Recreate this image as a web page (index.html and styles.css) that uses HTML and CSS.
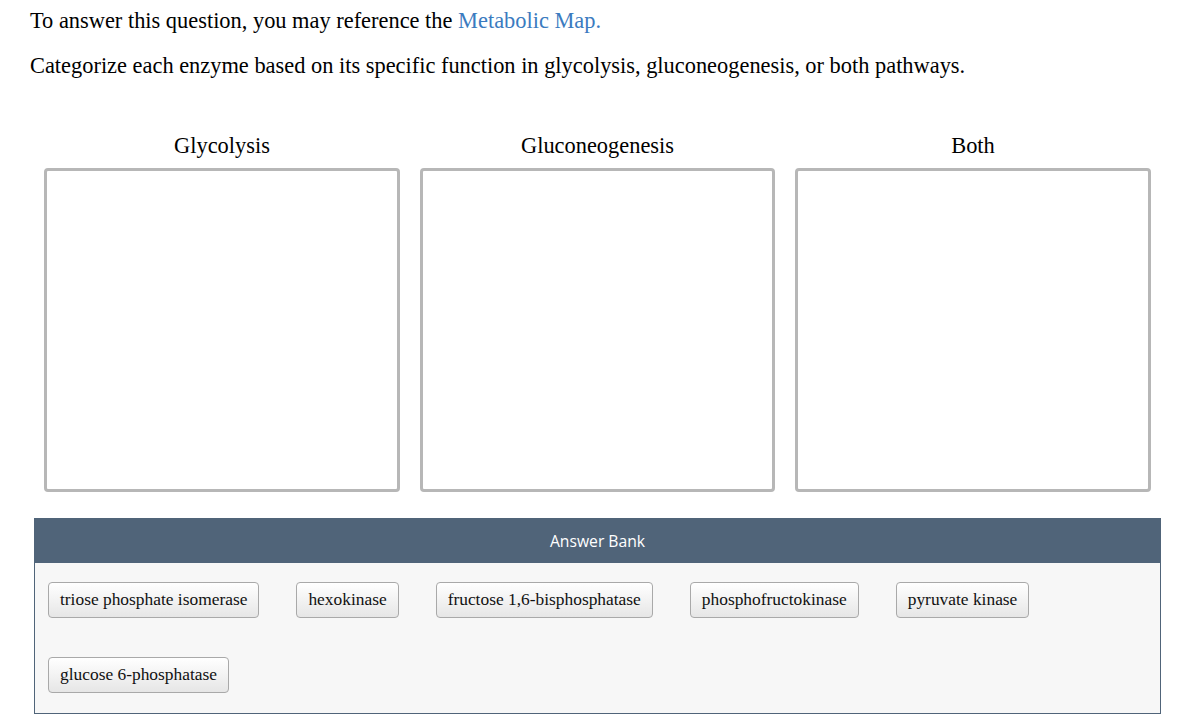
FILE: index.html
```html
<!DOCTYPE html>
<html>
<head>
<meta charset="utf-8">
<link rel="stylesheet" href="styles.css">
</head>
<body>
<div class="page">
  <p class="intro first">To answer this question, you may reference the <a class="link" href="#">Metabolic Map.</a></p>
  <p class="intro second">Categorize each enzyme based on its specific function in glycolysis, gluconeogenesis, or both pathways.</p>
  <div class="categories">
    <div class="category">
      <div class="cat-title">Glycolysis</div>
      <div class="dropbox"></div>
    </div>
    <div class="category">
      <div class="cat-title">Gluconeogenesis</div>
      <div class="dropbox"></div>
    </div>
    <div class="category">
      <div class="cat-title">Both</div>
      <div class="dropbox"></div>
    </div>
  </div>
  <div class="bank">
    <div class="bank-header">Answer Bank</div>
    <div class="bank-body">
      <div class="chip">triose phosphate isomerase</div>
      <div class="chip">hexokinase</div>
      <div class="chip">fructose 1,6-bisphosphatase</div>
      <div class="chip">phosphofructokinase</div>
      <div class="chip">pyruvate kinase</div>
      <div class="chip">glucose 6-phosphatase</div>
    </div>
  </div>
</div>
</body>
</html>
```
FILE: styles.css
```css
html, body {
  margin: 0;
  padding: 0;
  background: #ffffff;
}
body {
  font-family: "Liberation Serif", "Times New Roman", serif;
  color: #000;
}
.page {
  padding: 9px 0 0 30px;
  width: 1164px;
}
.intro {
  margin: 0;
  font-size: 22.4px;
  line-height: 24px;
}
.intro.second {
  margin-top: 21px;
}
.link {
  color: #3b7bbf;
  text-decoration: none;
}
.categories {
  margin: 55px 0 0 14px;
  width: 1107px;
  display: grid;
  grid-template-columns: 356px 355px 356px;
  column-gap: 20px;
}
.category {
  display: flex;
  flex-direction: column;
  align-items: stretch;
}
.cat-title {
  text-align: center;
  font-size: 22.4px;
  line-height: 26px;
  margin-bottom: 9px;
}
.dropbox {
  height: 318px;
  border: 3px solid #b7b7b7;
  border-radius: 4px;
  background: #fff;
}
.bank {
  margin: 26px 0 0 4px;
  width: 1127px;
  border: 1px solid #506479;
  box-sizing: border-box;
}
.bank-header {
  background: #506479;
  color: #ffffff;
  font-family: "Open Sans", "Noto Sans", sans-serif;
  font-size: 15.7px;
  height: 44px;
  line-height: 44px;
  text-align: center;
}
.bank-body {
  background: #f7f7f7;
  padding: 19px 13px 20px 13px;
  display: flex;
  flex-wrap: wrap;
  column-gap: 37px;
  row-gap: 39px;
}
.chip {
  font-size: 17.4px;
  height: 34px;
  line-height: 32px;
  padding: 0 11px;
  border: 1px solid #a9a9a9;
  border-radius: 4px;
  background: linear-gradient(#ffffff, #e6e6e6);
  color: #111;
  white-space: nowrap;
}
```
